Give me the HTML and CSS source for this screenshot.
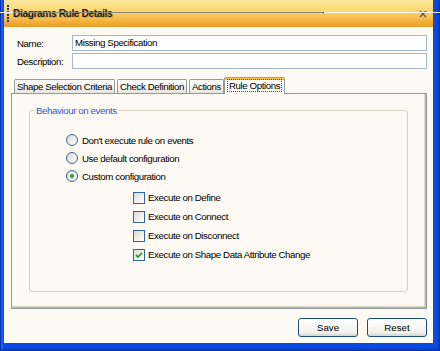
FILE: index.html
```html
<!DOCTYPE html>
<html>
<head>
<meta charset="utf-8">
<link rel="stylesheet" href="styles.css">
</head>
<body>
<div class="window">
  <div class="titlebar">
    <span class="grip"></span>
    <span class="title">Diagrams Rule Details</span>
    <span class="close"><svg width="8" height="8" viewBox="0 0 8 8"><path d="M1 1L7 7M7 1L1 7" stroke="#5e5a4e" stroke-width="1.4" fill="none"/></svg></span>
  </div>
  <div class="body">
    <div class="field"><span class="label">Name:</span><div class="input">Missing Specification</div></div>
    <div class="field"><span class="label">Description:</span><div class="input"></div></div>
    <div class="tabs">
      <div class="tab">Shape Selection Criteria</div>
      <div class="tab">Check Definition</div>
      <div class="tab">Actions</div>
      <div class="tab active"><span class="focus">Rule Options</span></div>
    </div>
    <div class="panel">
      <fieldset class="group">
        <legend>Behaviour on events</legend>
        <div class="options">
          <div class="opt"><span class="radio"></span>Don't execute rule on events</div>
          <div class="opt"><span class="radio"></span>Use default configuration</div>
          <div class="opt"><span class="radio checked"></span>Custom configuration</div>
          <div class="checks">
            <div class="chk"><span class="box"></span>Execute on Define</div>
            <div class="chk"><span class="box"></span>Execute on Connect</div>
            <div class="chk"><span class="box"></span>Execute on Disconnect</div>
            <div class="chk"><span class="box"><svg width="10" height="10" viewBox="0 0 10 10"><path d="M2 4.8L4 7L8 2.8" stroke="#21a121" stroke-width="1.8" fill="none"/></svg></span>Execute on Shape Data Attribute Change</div>
          </div>
        </div>
      </fieldset>
    </div>
    <div class="buttons">
      <button class="btn">Save</button>
      <button class="btn">Reset</button>
    </div>
  </div>
  <span class="scanline"></span>
</div>
</body>
</html>
```
FILE: styles.css
```css
html, body {
  margin: 0;
  padding: 0;
  background: #fff;
}
body {
  font-family: "Liberation Sans", Arial, sans-serif;
  font-size: 9.7px;
  letter-spacing: -0.4px;
  color: #000;
}
.window {
  position: relative;
  width: 440px;
  height: 351px;
  box-sizing: border-box;
  display: flex;
  flex-direction: column;
  padding: 0 7px 8px 4px;
  background: #0a4ae4;
  box-shadow: inset 1px 0 #0030b0, inset -1px 0 #0030b0, inset 0 -1px #0030b0, inset 3px 0 #1a5cf0, inset -3px 0 #0b3fd0, inset 0 -3px #0b3fd0;
}
.titlebar {
  flex: none;
  height: 27px;
  display: flex;
  align-items: center;
  background: linear-gradient(#fde99e 0%, #fcd977 35%, #f6bb48 70%, #ec9b24 100%);
}
.grip {
  width: 2px;
  height: 18px;
  margin-left: 3px;
  background: repeating-linear-gradient(to bottom, #27356a 0 2px, transparent 2px 3px);
}
.title {
  margin-left: 4px;
  font-weight: bold;
  font-size: 10.2px;
  color: #1a1a1a;
  text-shadow: 1px 1px 0 rgba(120, 80, 0, 0.25);
}
.close {
  margin-left: auto;
  margin-right: 6px;
  display: flex;
}
.scanline {
  position: absolute;
  left: 0;
  top: 12px;
  width: 440px;
  height: 1px;
  background: linear-gradient(to right, #ffffff 0 13px, #8d8a80 13px 323px, #1a1a1a 323px 324px, #ffffff 324px);
}
.body {
  flex: 1;
  background: #fdfaf3;
  padding: 8px 6px 0 7px;
  display: flex;
  flex-direction: column;
}
.field {
  display: flex;
  align-items: center;
  height: 16px;
}
.field + .field {
  margin-top: 2px;
}
.label {
  flex: none;
  width: 55px;
  margin-left: 6px;
}
.input {
  flex: 1;
  height: 16px;
  box-sizing: border-box;
  border: 1px solid #a3b7cf;
  background: #fff;
  padding-left: 2px;
  line-height: 14px;
}
.tabs {
  display: flex;
  align-items: flex-end;
  height: 16px;
  margin-top: 8px;
  padding-left: 3px;
}
.tab {
  height: 14px;
  box-sizing: border-box;
  border: 1px solid #919b9c;
  border-bottom: none;
  border-radius: 2px 2px 0 0;
  padding: 0 2px;
  margin-right: 2px;
  line-height: 13px;
  background: linear-gradient(#fefefe, #f1f0ea 70%, #e6e4dc);
  white-space: nowrap;
}
.tab.active {
  position: relative;
  z-index: 1;
  height: 17px;
  margin: 0 -2px -1px -2px;
  padding: 2px 3px 0;
  border-top: none;
  background: linear-gradient(#e68b2c 0 1px, #ffc73c 1px 3px, #fdfcf8 3px);
}
.focus {
  display: inline-block;
  outline: 1px dotted #444;
  padding: 0 1px;
  line-height: 11px;
  margin-top: 1px;
}
.panel {
  height: 216px;
  box-sizing: border-box;
  border: 1px solid #919b9c;
  box-shadow: inset -1px -1px #b9b7aa, inset -2px -2px #dcd9ca;
  background: #fdfaf3;
  padding-top: 10px;
}
.group {
  margin: 0 18px 0 17px;
  padding: 0;
  height: 188px;
  box-sizing: border-box;
  border: 1px solid #d6d3c2;
  border-radius: 3px;
}
.group legend {
  margin-left: 5px;
  padding: 0 1px;
  color: #2a5bd8;
  line-height: 13px;
}
.options {
  padding: 14px 0 0 36px;
}
.opt {
  display: flex;
  align-items: center;
  height: 18px;
}
.radio {
  position: relative;
  flex: none;
  width: 12px;
  height: 12px;
  box-sizing: border-box;
  border: 1px solid #33659e;
  border-radius: 50%;
  background: linear-gradient(135deg, #dcd9cf, #ffffff);
  margin-right: 4px;
}
.radio.checked::after {
  content: "";
  position: absolute;
  left: 3px;
  top: 3px;
  width: 4px;
  height: 4px;
  border-radius: 50%;
  background: #21a121;
}
.checks {
  margin-left: 67px;
  margin-top: 3px;
}
.chk {
  display: flex;
  align-items: center;
  height: 19px;
}
.box {
  flex: none;
  width: 12px;
  height: 12px;
  box-sizing: border-box;
  border: 1px solid #33659e;
  background: linear-gradient(135deg, #dcdad0, #ffffff);
  margin-right: 3px;
  display: flex;
  align-items: center;
  justify-content: center;
}
.buttons {
  display: flex;
  justify-content: flex-end;
  gap: 9px;
  margin-top: 9px;
}
.btn {
  width: 60px;
  height: 19px;
  box-sizing: border-box;
  border: 1px solid #1b4d86;
  border-radius: 3px;
  background: linear-gradient(#ffffff, #f2f1ec 80%, #d8d3c8);
  font: inherit;
  color: #000;
  padding: 0;
}
```
